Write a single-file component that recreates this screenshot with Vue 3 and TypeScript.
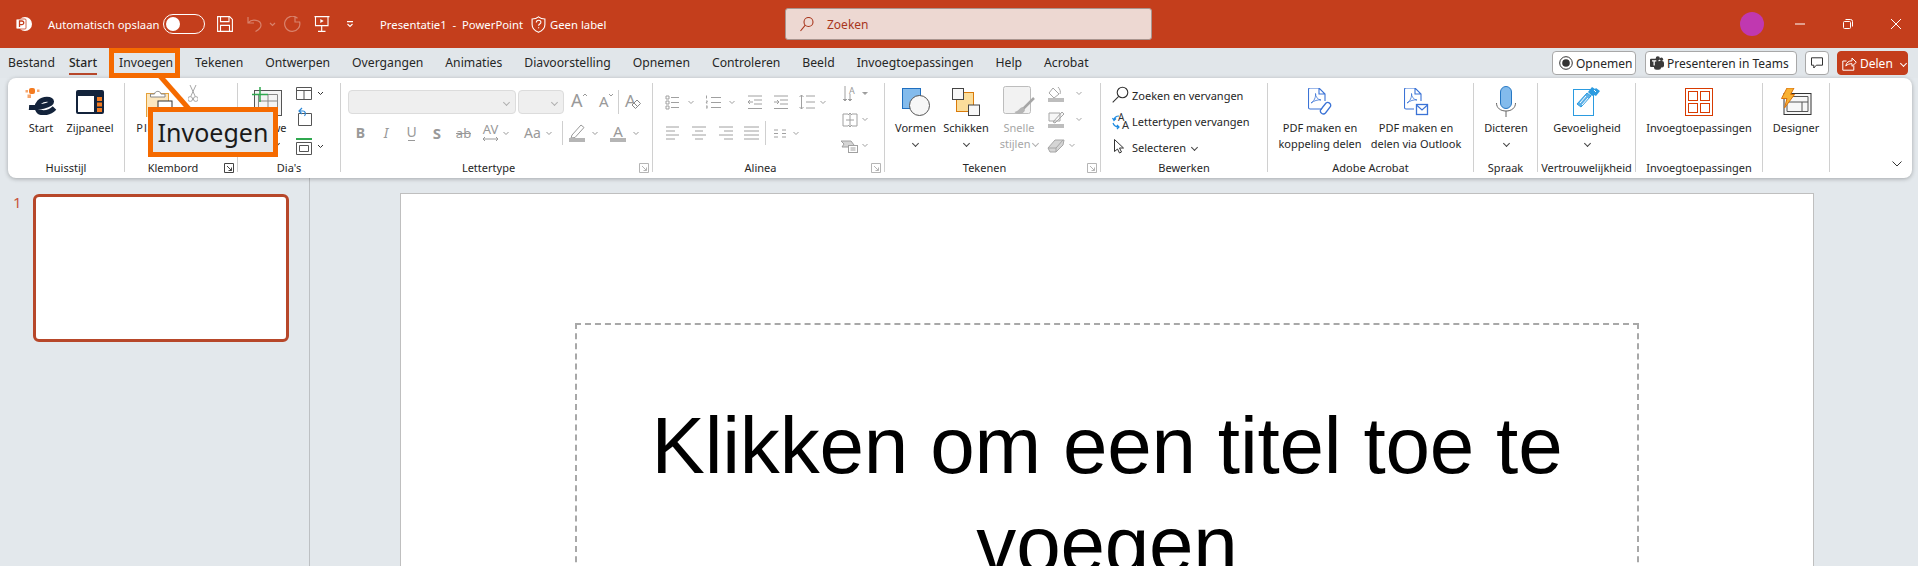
<script setup lang="ts">
const tabs: string[] = ['Start', 'Invoegen', 'Tekenen', 'Ontwerpen', 'Overgangen', 'Animaties', 'Diavoorstelling', 'Opnemen', 'Controleren', 'Beeld', 'Invoegtoepassingen', 'Help', 'Acrobat']
</script>

<template>
  <div class="app">
    <header class="titlebar">
      <svg class="logo" width="16" height="16" viewBox="16 16 16 16">
        <circle cx="25" cy="24" r="7" fill="#fff" />
        <rect x="16" y="19" width="10" height="10" rx="1" fill="#fff" stroke="#C43E1C" stroke-width=".8" />
        <path d="M19.5 27v-6h2.4a1.8 1.8 0 0 1 0 3.7h-2.4" fill="none" stroke="#C43E1C" stroke-width="1.3" />
      </svg>
      <span class="autosave">Automatisch opslaan</span>
      <span class="toggle"><i class="knob"></i></span>
      <svg class="qa-save" width="16" height="16" viewBox="217 16 16 16" fill="none" stroke="#fff" stroke-width="1.1">
        <path d="M217.6 16.6h12l2.8 2.8v12h-14.8z" />
        <path d="M220.5 16.6v5h8.5v-5M220.5 31.4v-6h9v6" />
      </svg>
      <svg class="qa-undo" width="30" height="16" viewBox="247 16 30 16" fill="none" stroke="#fff" stroke-width="1.2" opacity=".35">
        <path d="M248 17v6h6M248.2 22.8c4-4.5 12.8-2.6 12.8 2.4 0 2.6-2 4.3-5.5 6.3" />
        <path d="M270 23l2.5 2.5 2.500-2.500" />
      </svg>
      <svg class="qa-redo" width="17" height="16" viewBox="284 16 17 16" fill="none" stroke="#fff" stroke-width="1.200" opacity=".35">
        <path d="M295 17v5h5M299.500 21.500a7.600 7.600 0 1 1-2-3.200" />
      </svg>
      <svg class="qa-present" width="16" height="16" viewBox="314 16 16 16" fill="none" stroke="#fff" stroke-width="1.100">
        <path d="M315.500 16.600h12.500v9h-12.500zM314.500 16.600h15M321.700 25.600v5.800M318 31.400h7.500" />
        <path d="M320.300 19l3.400 2-3.400 2z" fill="#fff" stroke="none" />
      </svg>
      <svg class="qa-custom" width="6" height="7" viewBox="347 21 6 7" fill="none" stroke="#fff" stroke-width="1.100">
        <path d="M347 21.600h6M347.500 24l2.500 2.500 2.500-2.500" />
      </svg>
      <span class="doc">Presentatie1&nbsp; -&nbsp; PowerPoint</span>
      <svg class="shield" width="15" height="17" viewBox="531 15 15 17" fill="none" stroke="#fff" stroke-width="1.100">
        <path d="M538.500 15.800c1.800 1.500 3.800 2.100 6.400 2.200v5.500c0 3.700-2.500 6.300-6.400 7.800-3.900-1.500-6.400-4.100-6.400-7.800V18c2.600-.1 4.600-.7 6.400-2.200z" />
        <path d="M536.300 21.500c0-3 4.600-3 4.600-.3 0 1.800-2.300 1.800-2.300 3.500M538.600 26.300v1" />
      </svg>
      <span class="label-name">Geen label</span>
      <div class="search">
        <svg width="14" height="15" viewBox="799 17 14 15" fill="none" stroke="#A8361C" stroke-width="1.100">
          <circle cx="807.500" cy="22" r="4.500" /><path d="M804.300 25.200L799.500 31" />
        </svg>
        <span>Zoeken</span>
      </div>
      <i class="avatar"></i>
      <svg class="win-min" width="10" height="2" viewBox="0 0 10 2"><path d="M0 1h10" stroke="#fff" stroke-width="1" /></svg>
      <svg class="win-max" width="10" height="10" viewBox="0 0 10 10" fill="none" stroke="#fff" stroke-width="1">
        <rect x=".5" y="2.500" width="7" height="7" rx="1" /><path d="M2.500.5h5a2 2 0 0 1 2 2v5" />
      </svg>
      <svg class="win-close" width="10" height="10" viewBox="0 0 10 10" stroke="#fff" stroke-width="1"><path d="M0 0l10 10M10 0L0 10" /></svg>
    </header>

    <nav class="tabbar">
      <span class="tab bestand">Bestand</span>
      <span v-for="t in tabs" :key="t" class="tab" :class="{ active: t === 'Start' }">{{ t }}</span>
      <div class="actions">
        <button class="act a-rec">
          <svg width="14" height="14" viewBox="0 0 14 14"><circle cx="7" cy="7" r="6.300" fill="none" stroke="#333" /><circle cx="7" cy="7" r="3.800" fill="#333" /></svg>
          Opnemen
        </button>
        <button class="act a-teams">
          <svg width="14" height="14" viewBox="0 0 14 14" fill="#3a3a3a"><circle cx="11.400" cy="3.200" r="1.700" /><circle cx="7.800" cy="2.400" r="2.100" /><rect x="8" y="5" width="6" height="6.500" rx="2" /><rect x="4" y="5.200" width="7" height="8.500" rx="2.500" /><rect y="2.800" width="8.300" height="8.300" rx="1" /><path d="M2 4.800h4.300M4.150 4.800v4.600" stroke="#fff" stroke-width="1.300" /></svg>
          Presenteren in Teams
        </button>
        <button class="act a-comment">
          <svg width="12" height="12" viewBox="0 0 12 12" fill="none" stroke="#333"><path d="M.5.8h11v7.400H5.300L2.800 11V8.200H.5z" /></svg>
        </button>
        <button class="act a-share">
          <svg width="15" height="15" viewBox="0 0 15 15" fill="none" stroke="#fff"><path d="M4.500 5H.8v9.200h11V9.500M3.800 10c.4-3.500 3-5.200 6.200-5.200V2l4.300 4.300-4.300 4V7.700c-2.500 0-4.700.6-6.200 2.300z" /></svg>
          Delen
          <i class="chev chev-w"></i>
        </button>
      </div>
    </nav>

    <section class="ribbon">
      <div class="group g1">
        <div class="body">
          <div class="big w50">
            <div class="big-icon">
              <svg width="32" height="27" viewBox="25 87 32 27" fill="none">
                <rect x="29" y="87" width="6" height="6" rx="2" fill="#F47B20" /><rect x="25.500" y="89" width="2.500" height="2.500" fill="#F7A56B" /><rect x="27.500" y="93.500" width="3.500" height="3.500" fill="#F7A56B" /><rect x="37" y="88.500" width="2.500" height="2.500" fill="#F7A56B" />
                <path d="M29 106.500C37 107 52 104.500 51.500 100.500c-.4-3-8-3.500-12 .5-4.500 5-2 10.800 4 10.800 4 0 8-1.800 11-4.800" stroke="#13233B" stroke-width="5" />
              </svg>
            </div>
            <div class="big-text">Start</div>
          </div>
          <div class="big w48">
            <div class="big-icon">
              <svg width="28" height="24" viewBox="76 89 28 24">
                <rect x="76" y="89" width="28" height="24" rx="2" fill="#13233B" /><rect x="78" y="95" width="16" height="16" fill="#fff" />
                <rect x="97" y="96" width="5" height="4" fill="#F47B20" /><rect x="97" y="101.500" width="5" height="4" fill="#F47B20" /><rect x="97" y="107" width="5" height="4" fill="#F47B20" />
              </svg>
            </div>
            <div class="big-text">Zijpaneel</div>
          </div>
        </div>
        <div class="label"><span>Huisstijl</span></div>
      </div>

      <div class="group g2">
        <div class="body">
          <div class="big w48">
            <div class="big-icon">
              <svg width="28" height="30" viewBox="146 85 28 30">
                <rect x="146.500" y="91.500" width="22" height="24" fill="#FCE7BF" stroke="#E5A13A" />
                <path d="M150.500 95v-3h4c.5-3.500 6-3.500 6.500 0h4v3z" fill="#fff" stroke="#888" />
                <rect x="158" y="99" width="14" height="16" fill="#fff" stroke="#333" />
              </svg>
            </div>
            <div class="big-text wide-text">Plakken</div>
          </div>
          <svg class="scissors" width="10" height="17" viewBox="188 85 10 17" fill="none" stroke="#A6A6A6">
            <path d="M190 85l5.300 11.500M196 85l-5.300 11.500" /><circle cx="190.200" cy="99" r="2.400" /><circle cx="195.800" cy="99" r="2.400" />
          </svg>
        </div>
        <div class="label"><span>Klembord</span><svg class="launch" width="16" height="12" viewBox="0 0 16 12" fill="none" stroke="#444"><path d="M3.500 1.500h9v9h-9zM6 4l4.500 4.500M10.500 5.500v3h-3" /></svg></div>
      </div>

      <div class="group g3">
        <div class="body">
          <div class="big w58">
            <div class="big-icon">
              <svg width="31" height="29" viewBox="251 85 31 29" fill="none">
                <rect x="253.500" y="88.500" width="27" height="25" fill="#F4F4F4" stroke="#555" /><path d="M257.500 92.500h19v19h-19zM267 92.500v19M257.500 99h19" stroke="#888" />
                <path d="M251 92.500h16M259 85v15" stroke="#2FA84F" stroke-width="1.500" />
              </svg>
            </div>
            <div class="big-text">Nieuwe</div>
            <div class="big-text">dia <i class="chev"></i></div>
          </div>
          <div class="stack">
            <svg width="30" height="26" viewBox="296 81 30 26" fill="none" stroke="#555">
              <path d="M296.500 87.500h15v12h-15zM296.500 90.500h15M304 90.500v9" /><path d="M318 92l2.500 2.500 2.500-2.500" stroke="#333" />
            </svg>
            <svg width="30" height="26" viewBox="296 107 30 26" fill="none" stroke="#555">
              <path d="M298.500 113.500h13v12h-13z" /><path d="M302 108l-3 3 3 3M299 111h4c2.500 0 3 3 1.500 5" stroke="#2B88D8" stroke-width="1.200" />
            </svg>
            <svg width="30" height="26" viewBox="296 133 30 26" fill="none" stroke="#555">
              <path d="M296 139h16" stroke="#2FA84F" stroke-width="2" /><path d="M296.500 142.500h15v12h-15zM299.500 145.500h9v6h-9z" /><path d="M318 145l2.500 2.500 2.500-2.500" stroke="#333" />
            </svg>
          </div>
        </div>
        <div class="label"><span>Dia's</span></div>
      </div>

      <div class="group g4">
        <div class="body rows-body">
          <div class="row">
            <div class="combo c-font"><i class="chev chev-g"></i></div>
            <div class="combo c-size"><i class="chev chev-g"></i></div>
            <svg width="88" height="24" viewBox="564 90 88 24" class="gfx">
              <text x="571" y="107" font-size="18">A</text><path d="M583 96l2-2 2 2" fill="none" stroke="#999" />
              <text x="599" y="107" font-size="15">A</text><path d="M609 94l2 2 2-2" fill="none" stroke="#999" />
              <path d="M618.500 90v24" stroke="#CFCFCF" />
              <text x="625" y="107" font-size="17">A</text>
              <path d="M632 105l5-5 3.500 3.500-5 5zM634 103l3.500 3.500" fill="#fff" stroke="#888" />
            </svg>
          </div>
          <div class="row">
            <svg width="25" height="24" viewBox="348 121 25 24" class="gfx"><text x="360.500" y="138" text-anchor="middle" font-size="14" font-weight="700">B</text></svg>
            <svg width="26" height="24" viewBox="373 121 26 24" class="gfx"><text x="386" y="138" text-anchor="middle" font-size="14" font-style="italic">I</text></svg>
            <svg width="25" height="24" viewBox="399 121 25 24" class="gfx"><text x="411.500" y="137" text-anchor="middle" font-size="14">U</text><path d="M408 140.500h7" stroke="#999" /></svg>
            <svg width="26" height="24" viewBox="424 121 26 24" class="gfx"><text x="437" y="138.500" text-anchor="middle" font-size="15" font-weight="700">S</text></svg>
            <svg width="27" height="24" viewBox="450 121 27 24" class="gfx"><text x="463.500" y="138" text-anchor="middle" font-size="13">ab</text><path d="M456 133.500h15" stroke="#999" /></svg>
            <svg width="35" height="24" viewBox="477 121 35 24" class="gfx"><text x="490.500" y="134" text-anchor="middle" font-size="13">AV</text><path d="M483 139h15M485 137l-2 2 2 2M496 137l2 2-2 2M503.500 132l2.500 2.500 2.500-2.500" fill="none" stroke="#999" /></svg>
            <svg width="44" height="24" viewBox="512 121 44 24" class="gfx"><text x="532.500" y="138" text-anchor="middle" font-size="14">Aa</text><path d="M546.500 132l2.500 2.500 2.500-2.500" fill="none" stroke="#999" /></svg>
            <svg width="46" height="24" viewBox="556 121 46 24" class="gfx"><path d="M562.500 121v24" stroke="#CFCFCF" /><path d="M572 135l9-10 3 2.500-9 10-4 .5z" fill="#fff" stroke="#999" /><path d="M569 140h16" stroke="#B5B5B5" stroke-width="4" /><path d="M592.500 132l2.500 2.500 2.500-2.500" fill="none" stroke="#999" /></svg>
            <svg width="42" height="24" viewBox="602 121 42 24" class="gfx"><text x="618" y="137" text-anchor="middle" font-size="15">A</text><path d="M610 140h16" stroke="#B5B5B5" stroke-width="4" /><path d="M633.500 132l2.500 2.500 2.500-2.500" fill="none" stroke="#999" /></svg>
          </div>
        </div>
        <div class="label"><span>Lettertype</span><svg class="launch" width="16" height="12" viewBox="0 0 16 12" fill="none" stroke="#B5B5B5"><path d="M3.500 1.500h9v9h-9zM6 4l4.500 4.500M10.500 5.500v3h-3" /></svg></div>
      </div>

      <div class="group g5">
        <div class="body">
          <div class="rows-body rows-alinea">
            <div class="row">
              <svg width="38" height="24" viewBox="660 90 38 24" fill="none" stroke="#A0A0A0"><path d="M666 96h3v3h-3zM666 101h3v3h-3zM666 106h3v3h-3zM671 97.500h8M671 102.500h8M671 107.500h8" /><path d="M688.500 101l2.500 2.500 2.500-2.500" /></svg>
              <svg width="42" height="24" viewBox="698 90 42 24" fill="none" stroke="#A0A0A0"><path d="M706.500 95.500v3M706 101h1.500l-1.500 2h1.500M706 106h1.500l-1 1 1 1h-1.500M711 97.500h10M711 102.500h10M711 107.500h10" /><path d="M729.500 101l2.500 2.500 2.500-2.500" /></svg>
              <svg width="28" height="24" viewBox="740 90 28 24" fill="none" stroke="#A0A0A0"><path d="M748 96h14M754 100h8M754 104h8M748 108.500h14M753 102h-5M750 100l-2 2 2 2" stroke-width="1" /></svg>
              <svg width="26" height="24" viewBox="768 90 26 24" fill="none" stroke="#A0A0A0"><path d="M774 96h14M780 100h8M780 104h8M774 108.500h14M774 102h5M777 100l2 2-2 2" /></svg>
              <svg width="36" height="24" viewBox="794 90 36 24" fill="none" stroke="#A0A0A0"><path d="M806 96h9M806 102h9M806 108h9M801.500 95v14M799.500 97l2-2 2 2M799.500 107l2 2 2-2" /><path d="M820.500 101l2.500 2.500 2.500-2.500" /></svg>
            </div>
            <div class="row">
              <svg width="26" height="24" viewBox="660 121 26 24" fill="none" stroke="#A0A0A0"><path d="M666 127h13M666 131h9M666 135h13M666 139h9" /></svg>
              <svg width="26" height="24" viewBox="686 121 26 24" fill="none" stroke="#A0A0A0"><path d="M692 127h14M695 131h8M692 135h14M695 139h8" /></svg>
              <svg width="26" height="24" viewBox="712 121 26 24" fill="none" stroke="#A0A0A0"><path d="M719 127h14M724 131h9M719 135h14M724 139h9" /></svg>
              <svg width="24" height="24" viewBox="738 121 24 24" fill="none" stroke="#A0A0A0"><path d="M744 127h15M744 131h15M744 135h15M744 139h15" /></svg>
              <svg width="42" height="24" viewBox="762 121 42 24" fill="none" stroke="#A0A0A0"><path d="M765.500 121v24" stroke="#CFCFCF" /><path d="M774 130h4M774 133.500h4M774 137h4M782 130h4M782 133.500h4M782 137h4" /><path d="M793.500 132l2.500 2.500 2.500-2.500" /></svg>
            </div>
          </div>
          <div class="stack">
            <svg width="34" height="26" viewBox="838 81 34 26" fill="none" stroke="#A0A0A0" class="gfx"><path d="M845 86v15M843 99l2 2 2-2M850 94v7M848 99l2 2 2-2" /><text x="849" y="94" font-size="9" stroke="none">A</text><path d="M862.500 92l2.500 2.500 2.500-2.500" /></svg>
            <svg width="34" height="26" viewBox="838 107 34 26" fill="none" stroke="#A0A0A0"><path d="M848 114h-5v12h5M852 114h5v12h-5M850 113v14M848 115l2-2 2 2M848 125l2 2 2-2M846 120h8" /><path d="M862.500 118l2.500 2.500 2.500-2.500" /></svg>
            <svg width="34" height="26" viewBox="838 133 34 26" fill="none" stroke="#A0A0A0"><path d="M841 141h10l3 4-2 2h-10l2-3z" fill="#D5D5D5" /><rect x="848.500" y="145.500" width="9" height="7" fill="#fff" /><path d="M850.500 148h5M850.500 150h5" /><path d="M862.500 144l2.500 2.500 2.500-2.500" /></svg>
          </div>
        </div>
        <div class="label"><span>Alinea</span><svg class="launch" width="16" height="12" viewBox="0 0 16 12" fill="none" stroke="#B5B5B5"><path d="M3.500 1.500h9v9h-9zM6 4l4.500 4.500M10.500 5.500v3h-3" /></svg></div>
      </div>

      <div class="group g6">
        <div class="body">
          <div class="big w61">
            <div class="big-icon">
              <svg width="28" height="28" viewBox="902 87 28 28"><rect x="902.500" y="87.500" width="18" height="20" fill="#83BBEC" stroke="#1F6FC0" /><circle cx="919.500" cy="104.500" r="10" fill="#F7F7F7" stroke="#555" /></svg>
            </div>
            <div class="big-text">Vormen</div>
            <div class="big-text"><i class="chev"></i></div>
          </div>
          <div class="big w40">
            <div class="big-icon">
              <svg width="28" height="28" viewBox="953 87 28 28"><rect x="957.500" y="91.500" width="17" height="19" fill="#FBDD9A" stroke="#D97A0A" /><rect x="953.500" y="87.500" width="11" height="11" fill="#F7F7F7" stroke="#444" /><rect x="969.500" y="104" width="11" height="10.500" fill="#F7F7F7" stroke="#444" /></svg>
            </div>
            <div class="big-text">Schikken</div>
            <div class="big-text"><i class="chev"></i></div>
          </div>
          <div class="big w46 disabled">
            <div class="big-icon">
              <svg width="32" height="31" viewBox="1004 87 32 31"><rect x="1004.500" y="87.500" width="27" height="27" rx="2" fill="#F2F2F2" stroke="#BDBDBD" /><path d="M1035 99l-11 11" stroke="#A6A6A6" stroke-width="2.500" /><path d="M1024 108c-3 0-4 4-8.500 5 3 3.500 9.500 2 10.500-2z" fill="#B5B5B5" /></svg>
            </div>
            <div class="big-text">Snelle</div>
            <div class="big-text">stijlen <i class="chev chev-g"></i></div>
          </div>
          <div class="stack">
            <svg width="48" height="26" viewBox="1042 81 48 26" fill="none" stroke="#A6A6A6"><path d="M1053 88l6 6-5 4-5-5zM1058 87c2 2 3 5 2 7" /><path d="M1048 100h16" stroke="#BDBDBD" stroke-width="4" /><path d="M1076.500 92l2.500 2.500 2.500-2.500" /></svg>
            <svg width="48" height="26" viewBox="1042 107 48 26" fill="none" stroke="#A6A6A6"><path d="M1049 113h11v8h-11zM1053 122l9-10 2 2-9 9z" fill="#F7F7F7" /><path d="M1048 126h16" stroke="#BDBDBD" stroke-width="4" /><path d="M1076.500 118l2.500 2.500 2.500-2.500" /></svg>
            <svg width="48" height="26" viewBox="1042 133 48 26" fill="none" stroke="#A6A6A6"><path d="M1048 148l7-8h9l-1 5-7 7h-6z" fill="#D5D5D5" /><path d="M1048 148h8l7-8M1056 148v4" /><path d="M1069.500 144l2.500 2.500 2.500-2.500" /></svg>
          </div>
        </div>
        <div class="label"><span>Tekenen</span><svg class="launch" width="16" height="12" viewBox="0 0 16 12" fill="none" stroke="#B5B5B5"><path d="M3.500 1.500h9v9h-9zM6 4l4.500 4.500M10.500 5.500v3h-3" /></svg></div>
      </div>

      <div class="group g7">
        <div class="body">
          <div class="stack stack-edit">
            <div class="line">
              <svg width="24" height="26" viewBox="1108 82 24 26" fill="none" stroke="#333" stroke-width="1.100"><circle cx="1122.500" cy="92.500" r="5.300" /><path d="M1118.700 96.300l-6 6" /></svg>
              <span>Zoeken en vervangen</span>
            </div>
            <div class="line">
              <svg width="24" height="26" viewBox="1108 108 24 26" fill="none" class="gfx-dark"><text x="1118" y="121" font-size="10">A</text><text x="1122" y="129" font-size="11">A</text><path d="M1119 116c-3 0-5 2-5 4M1112.500 118l1.500 2.500 2-2M1113 123c1 3 3 4 6 4M1117 129l2-2-2-2" stroke="#1E8AE0" stroke-width="1.200" /></svg>
              <span>Lettertypen vervangen</span>
            </div>
            <div class="line">
              <svg width="24" height="26" viewBox="1108 134 24 26" fill="none" stroke="#333"><path d="M1114.500 139.500v12l3-2.500 2 4 2-1-2-4h4z" fill="#fff" /></svg>
              <span>Selecteren</span><i class="chev sel-chev"></i>
            </div>
          </div>
        </div>
        <div class="label"><span>Bewerken</span></div>
      </div>

      <div class="group g8">
        <div class="body">
          <div class="big w104">
            <div class="big-icon">
              <svg width="24" height="28" viewBox="1312 89 24 28" fill="none" stroke="#3B73D6" stroke-width="1.100">
                <path d="M1326 110h-12a1.500 1.500 0 0 1-1.500-1.500v-18a1.500 1.500 0 0 1 1.500-1.500h9l6 6v7M1323 89v6h6" />
                <path d="M1315 104c3-1.500 5-6 4.500-9.500 0 3 1.800 6 5.500 6.500-3-.5-7 .7-10 3z" stroke-width=".8" />
                <path d="M1326 109l4-5a3 3 0 0 1 4.500 3.500l-5 6.500a3 3 0 0 1-5-3l2-2.500" stroke-width="1.300" />
              </svg>
            </div>
            <div class="big-text">PDF maken en</div>
            <div class="big-text">koppeling delen</div>
          </div>
          <div class="big w88">
            <div class="big-icon">
              <svg width="25" height="28" viewBox="1408 89 25 28" fill="none" stroke="#3B73D6" stroke-width="1.100">
                <path d="M1418 110h-8a1.500 1.500 0 0 1-1.500-1.500v-18a1.500 1.500 0 0 1 1.500-1.500h9l6 6v7M1419 89v6h6" />
                <path d="M1411 104c3-1.500 5-6 4.500-9.500 0 3 1.800 6 5.500 6.500-3-.5-7 .7-10 3z" stroke-width=".8" />
                <rect x="1420.500" y="105.500" width="11" height="10" fill="#fff" stroke-width="1.300" /><path d="M1420.500 106l5.500 5 5.500-5" />
              </svg>
            </div>
            <div class="big-text">PDF maken en</div>
            <div class="big-text">delen via Outlook</div>
          </div>
        </div>
        <div class="label"><span>Adobe Acrobat</span></div>
      </div>

      <div class="group g9">
        <div class="body">
          <div class="big w64">
            <div class="big-icon">
              <svg width="20" height="31" viewBox="1495 86 20 31" fill="none"><rect x="1499.500" y="86.500" width="11" height="22" rx="5.500" fill="#83BBEC" stroke="#2778C4" /><path d="M1495.500 103c0 5 4 8 9.500 8s9.500-3 9.500-8M1505 111v6" stroke="#666" /></svg>
            </div>
            <div class="big-text">Dicteren</div>
            <div class="big-text"><i class="chev"></i></div>
          </div>
        </div>
        <div class="label"><span>Spraak</span></div>
      </div>

      <div class="group g10">
        <div class="body">
          <div class="big w98">
            <div class="big-icon">
              <svg width="28" height="31" viewBox="1576 85 28 31" fill="none">
                <rect x="1576.500" y="88.500" width="20" height="26" fill="#fff" stroke="#2B9BE0" />
                <path d="M1580 103l10-11 4 3-10 11z" fill="#5BB0E8" stroke="#2B9BE0" /><path d="M1583 102l6-7M1585 104l6-7" stroke="#fff" />
                <path d="M1591 91l4-5 3 2 1-1 4 3-4 5-2-1-2 1z" fill="#2B9BE0" /><path d="M1597 89l2 2" stroke="#fff" />
              </svg>
            </div>
            <div class="big-text">Gevoeligheid</div>
            <div class="big-text"><i class="chev"></i></div>
          </div>
        </div>
        <div class="label"><span>Vertrouwelijkheid</span></div>
      </div>

      <div class="group g11">
        <div class="body">
          <div class="big w126">
            <div class="big-icon">
              <svg width="28" height="28" viewBox="1685 87 28 28" fill="none" stroke="#D83B01"><rect x="1685.500" y="87.500" width="27" height="27" /><rect x="1688.500" y="90.500" width="9" height="9" /><rect x="1700.500" y="90.500" width="9" height="9" /><rect x="1688.500" y="102.500" width="9" height="9" /><rect x="1700.500" y="102.500" width="9" height="9" /></svg>
            </div>
            <div class="big-text">Invoegtoepassingen</div>
          </div>
        </div>
        <div class="label"><span>Invoegtoepassingen</span></div>
      </div>

      <div class="group g12">
        <div class="body">
          <div class="big w66">
            <div class="big-icon">
              <svg width="31" height="28" viewBox="1780 85 31 28" fill="none">
                <rect x="1783" y="90.500" width="27" height="21" fill="#F7F7F7" stroke="#333" /><path d="M1786 93.500h21v15h-21zM1786 99h21M1801 99v9.500" stroke="#555" />
                <path d="M1786 85h7l-3.500 6.500h4L1783.500 105l2.500-9.500h-5.500z" fill="#F9B233" stroke="#D9730D" />
              </svg>
            </div>
            <div class="big-text">Designer</div>
          </div>
        </div>
      </div>

      <svg class="collapse" width="10" height="6" viewBox="0 0 10 6" fill="none" stroke="#333"><path d="M.5.5L5 5 9.500.5" /></svg>
    </section>

    <main class="workspace">
      <aside class="pane">
        <span class="num">1</span>
        <div class="thumb"></div>
      </aside>
      <div class="stage">
        <div class="slide">
          <div class="placeholder">
            <p class="title">Klikken om een titel toe te voegen</p>
          </div>
        </div>
      </div>
    </main>

    <div class="tab-mark"></div>
    <svg class="connector" width="50" height="33" viewBox="150 76 50 33"><path d="M160 76l29 33" stroke="#F56A00" stroke-width="5" /></svg>
    <div class="callout">Invoegen</div>
  </div>
</template>

<style>
html, body { margin: 0; overflow: hidden; background: #E3E8EC; }
</style>

<style scoped>
.app { position: relative; width: 1918px; height: 566px; overflow: hidden; background: #E3E8EC; font-family: "Noto Sans", "Open Sans", sans-serif; color: #262626; }
svg { display: block; flex: none; }

.titlebar { height: 48px; background: #C43E1C; color: #fff; display: flex; align-items: center; padding-left: 16px; font-size: 11.3px; white-space: nowrap; }
.autosave { width: 115px; margin-left: 16px; }
.toggle { width: 42px; height: 20px; box-sizing: border-box; border: 1.2px solid #fff; border-radius: 10px; display: flex; align-items: center; padding-left: 2px; }
.knob { width: 14px; height: 14px; background: #fff; border-radius: 50%; }
.qa-save { margin-left: 12px; }
.qa-undo { margin-left: 14px; }
.qa-redo { margin-left: 7px; }
.qa-present { margin-left: 13px; }
.qa-custom { margin-left: 17px; }
.doc { margin-left: 27px; width: 151px; }
.label-name { margin-left: 4px; width: 60px; }
.search { margin-left: 175px; width: 367px; height: 32px; box-sizing: border-box; background: #EDD8D2; border: 1px solid #A9958F; border-radius: 3px; display: flex; align-items: center; padding-left: 14px; gap: 13px; color: #A8361C; font-size: 12px; }
.avatar { margin-left: auto; width: 24px; height: 24px; border-radius: 50%; background: #C038B0; }
.win-min { margin-left: 31px; }
.win-max { margin-left: 38px; }
.win-close { margin-left: 38px; margin-right: 17px; }

.tabbar { height: 30px; background: #E1E6EA; display: flex; align-items: center; padding-left: 8px; gap: 22px; font-size: 12.2px; white-space: nowrap; }
.tab { position: relative; line-height: 30px; }
.bestand { margin-right: -8px; }
.active { font-weight: 500; }
.active::after { content: ""; position: absolute; left: 0; right: 0; bottom: 3px; height: 2px; background: #B7472A; }
.actions { margin-left: auto; padding-right: 10px; display: flex; gap: 8px; font-size: 12px; }
.act { height: 24px; box-sizing: border-box; background: #fff; border: 1px solid #A8A8A8; border-radius: 4px; padding: 0; display: flex; align-items: center; font: inherit; color: #262626; }
.a-rec { width: 84px; margin-right: 1px; padding-left: 6px; gap: 3px; }
.a-teams { width: 152px; padding-left: 4px; gap: 3px; }
.a-comment { width: 24px; justify-content: center; }
.a-share { width: 71px; background: #C43E1C; border-color: #C43E1C; color: #fff; padding-left: 4px; gap: 3px; }
.chev { display: inline-block; width: 4px; height: 4px; border-right: 1.2px solid #444; border-bottom: 1.2px solid #444; transform: rotate(45deg); vertical-align: 2px; }
.chev-w { border-color: #fff; margin-left: 5px; }
.chev-g { border-color: #B0B0B0; }

.ribbon { position: relative; z-index: 1; height: 100px; margin: 0 6px 0 8px; background: #fff; border-radius: 8px; box-shadow: 0 1px 4px rgba(0, 0, 0, .28); display: flex; align-items: flex-start; font-size: 11px; white-space: nowrap; }
.group { margin-top: 5px; height: 89px; border-right: 1px solid #D0D0D0; box-sizing: border-box; display: flex; flex-direction: column; }
.g1 { width: 117px; } .g2 { width: 113px; } .g3 { width: 103px; } .g4 { width: 312px; } .g5 { width: 232px; } .g6 { width: 216px; }
.g7 { width: 167px; } .g8 { width: 206px; } .g9 { width: 64px; } .g10 { width: 98px; } .g11 { width: 127px; } .g12 { width: 67px; }
.body { flex: none; height: 77px; display: flex; }
.g1 .body { padding-left: 8px; }
.g2 .body { padding-left: 11px; }
.label { flex: none; height: 16px; line-height: 16px; display: flex; align-items: center; }
.label span { flex: 1; text-align: center; }
.big { flex: none; display: flex; flex-direction: column; align-items: center; }
.big-icon { height: 37px; display: flex; align-items: center; justify-content: center; }
.big-text { line-height: 16px; height: 16px; }
.wide-text { letter-spacing: 1px; }
.w40 { width: 40px; } .w46 { width: 46px; margin-left: 10px; } .w48 { width: 48px; } .w50 { width: 50px; } .w58 { width: 58px; } .w61 { width: 61px; }
.w64 { width: 64px; } .w66 { width: 66px; } .w88 { width: 88px; } .w98 { width: 98px; } .w104 { width: 104px; } .w126 { width: 126px; }
.disabled { color: #A6A6A6; }
.scissors { margin: 2px 0 0 4px; }
.stack { margin-top: -2px; display: flex; flex-direction: column; }
.stack-edit { margin-top: -1px; padding-left: 7px; }
.line { height: 26px; display: flex; align-items: center; }
.sel-chev { margin-left: 6px; }
.rows-body { flex-direction: column; padding: 7px 0 0 7px; gap: 7px; box-sizing: border-box; }
.rows-alinea { display: flex; width: 185px; height: 77px; flex: none; }
.row { display: flex; height: 24px; align-items: center; }
.combo { height: 24px; box-sizing: border-box; background: #EFEFEF; border: 1px solid #DCDCDC; border-radius: 4px; display: flex; align-items: center; justify-content: flex-end; padding-right: 6px; }
.c-font { width: 168px; margin-right: 2px; }
.c-size { width: 46px; }
.gfx { fill: #999; font-family: "Noto Sans", sans-serif; }
.gfx text { fill: #999; }
.gfx-dark text { fill: #333; }
.collapse { position: absolute; right: 10px; top: 83px; }

.workspace { display: flex; height: 388px; }
.pane { width: 310px; box-sizing: border-box; border-right: 1px solid #BDC0C3; padding: 14px 0 0 13px; display: flex; align-items: flex-start; }
.num { width: 20px; color: #C8563C; font-size: 15px; line-height: 20px; }
.thumb { margin-top: 2px; width: 256px; height: 148px; box-sizing: border-box; background: #fff; border: 3px solid #B7472A; border-radius: 6px; }
.stage { flex: 1; padding: 15px 104px 0 90px; display: flex; min-width: 0; }
.slide { flex: 1; background: #fff; border: 1px solid #BFBFBF; border-bottom: 0; padding: 129px 174px 0 174px; }
.placeholder { height: 300px; border: 2px dashed #A8A8A8; border-bottom: 0; box-sizing: border-box; padding-top: 71px; }
.title { margin: 0; font-family: "Liberation Sans", sans-serif; font-size: 80px; letter-spacing: -.19px; line-height: 99px; color: #000; text-align: center; }

.tab-mark { position: absolute; z-index: 2; left: 109px; top: 48px; width: 71px; height: 30px; box-sizing: border-box; border: 5px solid #F56A00; }
.connector { position: absolute; z-index: 2; left: 150px; top: 76px; }
.callout { position: absolute; z-index: 3; left: 148px; top: 107px; width: 130px; height: 50px; box-sizing: border-box; border: 5px solid #F56A00; background: #E3E7EB; font-size: 25px; line-height: 41px; text-align: center; color: #1a1a1a; }
</style>
